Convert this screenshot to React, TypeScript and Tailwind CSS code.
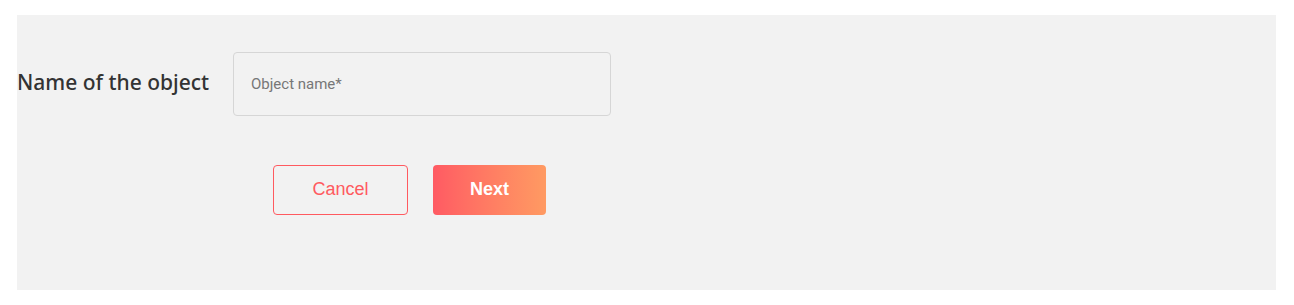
export default function App() {
  return (
    <div className="min-h-[305px] bg-white pt-[15px] px-[17px] pr-[18px]">
      <div className="h-[275px] bg-[#f2f2f2]">
        <div className="flex items-center pt-[37px]">
          <label className="-mt-[2px] w-[216px] font-['Noto_Sans',sans-serif] text-[21px] font-medium text-[#333333]">
            Name of the object
          </label>
          <input
            type="text"
            placeholder="Object name*"
            className="h-[64px] w-[378px] rounded-[4px] border border-[#d6d6d6] bg-[#f2f2f2] px-[17px] font-['Roboto',sans-serif] text-[15px] text-[#333] placeholder:text-[#777777] outline-none"
          />
        </div>
        <div className="flex gap-[25px] pl-[256px] pt-[49px]">
          <button className="h-[50px] w-[135px] rounded-[4px] border border-[#ff5a60] bg-transparent pb-[2px] font-['Liberation_Sans',sans-serif] text-[18px] text-[#ff5a60]">
            Cancel
          </button>
          <button className="h-[50px] w-[113px] rounded-[4px] bg-gradient-to-r from-[#ff5a63] to-[#ff9a62] pb-[2px] font-['Liberation_Sans',sans-serif] text-[18px] font-semibold text-white">
            Next
          </button>
        </div>
      </div>
    </div>
  );
}
